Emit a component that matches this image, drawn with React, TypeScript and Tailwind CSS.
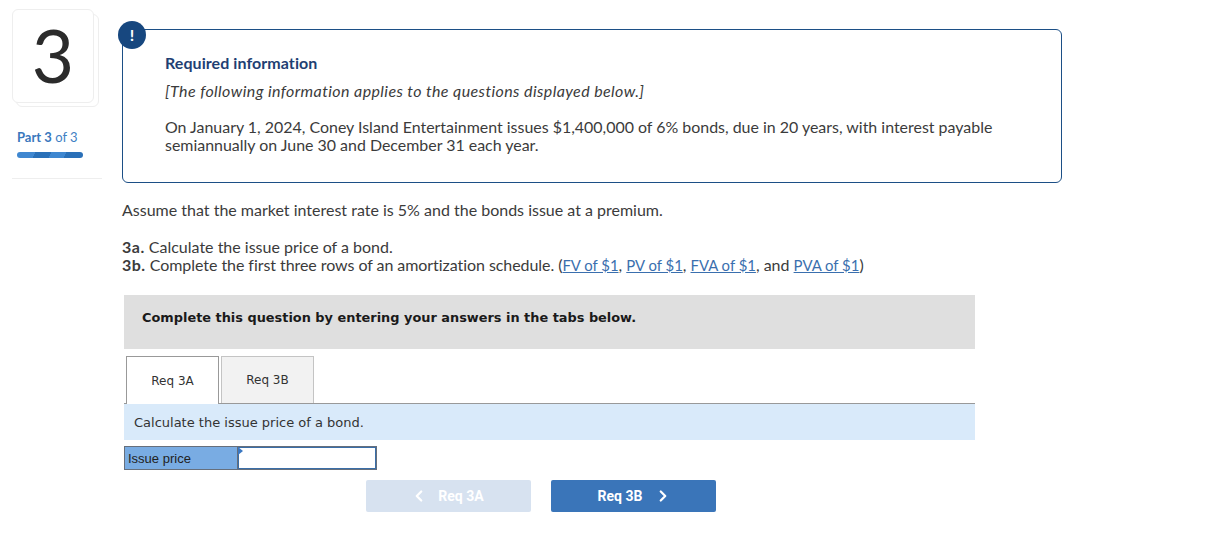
import { ChevronLeft, ChevronRight } from "lucide-react";

const body = "font-['Lato','Noto_Sans',sans-serif]";

function Sidebar() {
  return (
    <aside className="w-[90px] ml-3 mr-5 shrink-0 pt-[9px]">
      <div className="relative w-[82px] h-[94px]">
        <div className="absolute left-[4px] top-[5px] w-[83px] h-[93px] rounded-md border border-[#eeeeee] bg-white" />
        <div className="absolute inset-0 rounded-md border border-[#eeeeee] bg-white flex items-center justify-center">
          <span className="text-[73px] leading-none font-normal text-[#2b2b2b] font-['Lato',sans-serif] -mt-[1px]">3</span>
        </div>
      </div>
      <div className="mt-[26px] ml-[5px] text-[13px] leading-[16px] text-[#3f7fc4]">
        <b className="font-bold text-[#3a78bd]">Part 3</b> of 3
      </div>
      <div className="ml-[5px] mt-[7px] w-[66px] h-[6px] rounded-full bg-[linear-gradient(115deg,#3f87d0_0%,#3f87d0_27%,#2a70b8_27%,#2a70b8_50%,#3f87d0_50%,#3f87d0_72%,#2a70b8_72%,#2a70b8_100%)]" />
      <div className="mt-[20px] h-px bg-[#eeeeee]" />
    </aside>
  );
}

function Alert() {
  return (
    <div className="relative w-[940px] h-[154px] mt-[29px] rounded-md border border-[#1c4f86] bg-white pl-[42px] pt-[23px] text-[#3b3b3b]">
      <div className="absolute -left-[5px] -top-[9px] w-[28px] h-[28px] rounded-full bg-[#17477f] flex items-center justify-center text-white font-bold text-[16px] leading-none">
        !
      </div>
      <div className="text-[16px] leading-[20px] font-bold tracking-[0.07px] text-[#1f3f73]">Required information</div>
      <div className="mt-[8px] text-[16px] leading-[20px] italic tracking-[0.4px]">[The following information applies to the questions displayed below.]</div>
      <p className="mt-[17px] w-[840px] text-[15.95px] leading-[17.5px]">
        On January 1, 2024, Coney Island Entertainment issues $1,400,000 of 6% bonds, due in 20 years, with interest payable semiannually on June 30 and December 31 each year.
      </p>
    </div>
  );
}

function Lnk({ children }: { children: string }) {
  return <a className="text-[#3a6fae] underline text-[14.9px]">{children}</a>;
}

function Tabs() {
  const tab = "w-[93px] flex items-center justify-center text-[12px] font-['DejaVu_Sans',sans-serif] text-[#333333]";
  return (
    <div className="ml-[2px] w-[851px] font-['DejaVu_Sans',sans-serif]">
      <div className="h-[54px] bg-[#dfdfdf] flex items-center pl-[18px] pb-[8px] text-[12.9px] font-bold text-[#1a1a1a]">
        Complete this question by entering your answers in the tabs below.
      </div>
      <div className="mt-[7px] pl-[2px] flex gap-[2px] border-b border-[#999999] h-[48px]">
        <div className={`${tab} bg-white border-x border-t border-[#999999] h-[48px] relative`}>Req 3A</div>
        <div className={`${tab} bg-[#f2f2f2] border-x border-t border-[#c4c4c4] h-[47px]`}>Req 3B</div>
      </div>
      <div className="h-[36px] bg-[#d9eafa] flex items-center pl-[10px] pt-[2px] text-[13px] text-[#333333]">
        Calculate the issue price of a bond.
      </div>
      <div className="mt-[6px] flex h-[24px] w-[253px] border border-[#666f7c] font-['Liberation_Sans',sans-serif]">
        <div className="w-[113px] bg-[#79ace3] border-r border-[#666f7c] flex items-center pl-[3px] pt-[2px] text-[13px] text-[#222222]">Issue price</div>
        <div className="relative flex-1 border border-[#3a6ea8] bg-white">
          <div className="absolute -left-px -top-[1px] w-0 h-0 border-y-[4px] border-y-transparent border-l-[5px] border-l-[#3b78c2]" />
        </div>
      </div>
    </div>
  );
}

function Buttons() {
  const btn = "w-[165px] h-[32px] rounded-[2px] flex items-center justify-center text-white font-bold text-[14px] font-['Roboto',sans-serif]";
  return (
    <div className="ml-[244px] mt-[10px] flex gap-[20px]">
      <div className={`${btn} bg-[#d7e2f0]`}>
        <ChevronLeft size={18} strokeWidth={3} className="mr-[10px] -ml-[3px]" />Req 3A
      </div>
      <div className={`${btn} bg-[#3a75b9]`}>
        <span className="ml-[3px]">Req 3B</span><ChevronRight size={18} strokeWidth={3} className="ml-[12px]" />
      </div>
    </div>
  );
}

export default function App() {
  return (
    <div className={`flex w-[1210px] h-[553px] bg-white overflow-hidden ${body}`}>
      <Sidebar />
      <main className="flex-1">
        <Alert />
        <div className="mt-[18px] text-[16px] leading-[18px] text-[#3b3b3b]">
          <p>Assume that the market interest rate is 5% and the bonds issue at a premium.</p>
          <p className="mt-[19px]"><b className="tracking-[0.5px]">3a.</b> Calculate the issue price of a bond.</p>
          <p><b className="tracking-[0.5px]">3b.</b> <span className="tracking-[-0.06px]">Complete the first three rows of an amortization schedule. (</span><Lnk>FV of $1</Lnk>, <Lnk>PV of $1</Lnk>, <Lnk>FVA of $1</Lnk>, and <Lnk>PVA of $1</Lnk>)</p>
        </div>
        <div className="mt-[21px]">
          <Tabs />
        </div>
        <Buttons />
      </main>
    </div>
  );
}
